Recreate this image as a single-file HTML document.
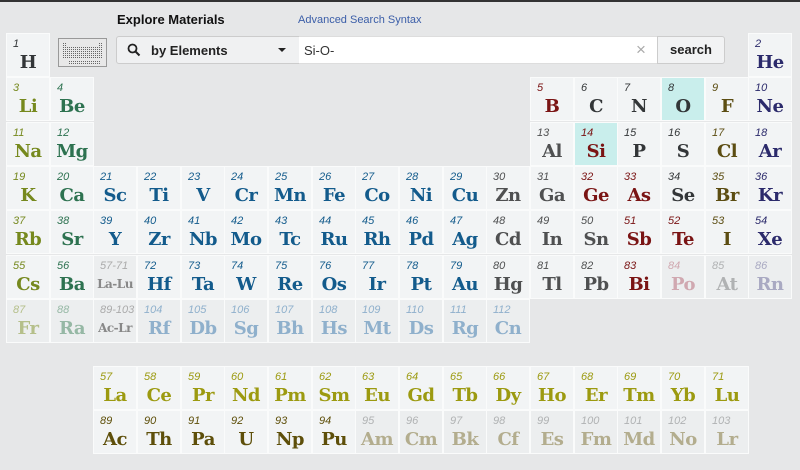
<!DOCTYPE html>
<html><head><meta charset="utf-8"><style>
*{box-sizing:border-box;margin:0;padding:0}
body{width:800px;height:470px;background:#e6e7e8;position:relative;overflow:hidden;font-family:"Liberation Sans",sans-serif}
.top{position:absolute;left:0;top:0;width:800px;height:2px;background:#333}
.c{position:absolute;width:44px;height:44px;background:#f2f4f5;border:1px solid #fafbfb}
.c i{position:absolute;left:6px;top:4px;font-size:11px;font-style:italic;font-family:"Liberation Sans",sans-serif}
.c b{position:absolute;left:0;right:0;top:18px;text-align:center;font-family:"DejaVu Serif",serif;font-weight:bold;font-size:18px;letter-spacing:-0.5px}
.a{color:#76891e}.e{color:#2d7250}.t{color:#135b8c}.p{color:#4f5051}.m{color:#7a1414}.n{color:#333638}.h{color:#5c4d12}.g{color:#2b2a6b}.l{color:#9c9a10}.k{color:#5e4f0a}
.f{background:#eceeef}
.fa{color:#b5bf8a}.fe{color:#96b8a5}.ft{color:#8fb0cc}.fm{color:#d0a8b0}.fp{color:#b0b2b3}.fg{color:#a9a9c2}.fk{color:#b3ad8e}
.cy{background:#c9eeec}
.r b{font-size:12px;top:21px;color:#888}.r i{color:#aaa}
</style></head><body>
<div class="top"></div>
<div style="position:absolute;left:117px;top:12px;font-size:13px;font-weight:bold;color:#111">Explore Materials</div>
<div style="position:absolute;left:298px;top:14px;font-size:11px;color:#3b5ea8">Advanced Search Syntax</div>
<div style="position:absolute;left:58px;top:38px;width:49px;height:29px;border:1px solid #999;background:#e8e8e8">
<svg width="47" height="27" viewBox="0 0 47 27">
<defs><pattern id="d" width="2" height="2" patternUnits="userSpaceOnUse"><rect width="1" height="1" fill="#666"/></pattern></defs>
<rect x="3" y="3" width="4" height="17" fill="url(#d)"/><rect x="39" y="3" width="5" height="17" fill="url(#d)"/><rect x="7" y="8" width="32" height="12" fill="url(#d)"/><rect x="9" y="21" width="32" height="4" fill="url(#d)"/></svg></div>
<div style="position:absolute;left:116px;top:36px;width:184px;height:28px;background:#f0f1f2;border:1px solid #ccc;border-radius:3px 0 0 3px">
<svg style="position:absolute;left:10px;top:6px" width="14" height="14" viewBox="0 0 14 14"><circle cx="5.5" cy="5.5" r="4" fill="none" stroke="#222" stroke-width="1.8"/><line x1="8.5" y1="8.5" x2="12.5" y2="12.5" stroke="#222" stroke-width="2"/></svg>
<span style="position:absolute;left:34px;top:6px;font-size:13px;font-weight:bold;color:#222">by Elements</span>
<span style="position:absolute;left:161px;top:11px;width:0;height:0;border-left:4px solid transparent;border-right:4px solid transparent;border-top:4px solid #222"></span></div>
<div style="position:absolute;left:299px;top:36px;width:358px;height:28px;background:#fff;border-top:1px solid #ddd;border-bottom:1px solid #ddd">
<span style="position:absolute;left:5px;top:6px;font-size:13px;color:#333">Si-O-</span>
<span style="position:absolute;left:337px;top:3px;font-size:17px;color:#aaa">×</span></div>
<div style="position:absolute;left:657px;top:36px;width:68px;height:28px;background:#f2f3f4;border:1px solid #ccc;border-radius:0 3px 3px 0;font-size:13px;font-weight:bold;color:#222;text-align:center;line-height:26px">search</div>

<div class="c" style="left:6px;top:33px"><i class="n">1</i><b class="n">H</b></div>
<div class="c" style="left:748px;top:33px"><i class="g">2</i><b class="g">He</b></div>

<div class="c" style="left:6px;top:77px"><i class="a">3</i><b class="a">Li</b></div>
<div class="c" style="left:50px;top:77px"><i class="e">4</i><b class="e">Be</b></div>
<div class="c" style="left:530px;top:77px"><i class="m">5</i><b class="m">B</b></div>
<div class="c" style="left:574px;top:77px"><i class="n">6</i><b class="n">C</b></div>
<div class="c" style="left:617px;top:77px"><i class="n">7</i><b class="n">N</b></div>
<div class="c cy" style="left:661px;top:77px"><i class="n">8</i><b class="n">O</b></div>
<div class="c" style="left:705px;top:77px"><i class="h">9</i><b class="h">F</b></div>
<div class="c" style="left:748px;top:77px"><i class="g">10</i><b class="g">Ne</b></div>

<div class="c" style="left:6px;top:122px"><i class="a">11</i><b class="a">Na</b></div>
<div class="c" style="left:50px;top:122px"><i class="e">12</i><b class="e">Mg</b></div>
<div class="c" style="left:530px;top:122px"><i class="p">13</i><b class="p">Al</b></div>
<div class="c cy" style="left:574px;top:122px"><i class="m">14</i><b class="m">Si</b></div>
<div class="c" style="left:617px;top:122px"><i class="n">15</i><b class="n">P</b></div>
<div class="c" style="left:661px;top:122px"><i class="n">16</i><b class="n">S</b></div>
<div class="c" style="left:705px;top:122px"><i class="h">17</i><b class="h">Cl</b></div>
<div class="c" style="left:748px;top:122px"><i class="g">18</i><b class="g">Ar</b></div>

<div class="c" style="left:6px;top:166px"><i class="a">19</i><b class="a">K</b></div>
<div class="c" style="left:50px;top:166px"><i class="e">20</i><b class="e">Ca</b></div>
<div class="c" style="left:93px;top:166px"><i class="t">21</i><b class="t">Sc</b></div>
<div class="c" style="left:137px;top:166px"><i class="t">22</i><b class="t">Ti</b></div>
<div class="c" style="left:181px;top:166px"><i class="t">23</i><b class="t">V</b></div>
<div class="c" style="left:224px;top:166px"><i class="t">24</i><b class="t">Cr</b></div>
<div class="c" style="left:268px;top:166px"><i class="t">25</i><b class="t">Mn</b></div>
<div class="c" style="left:312px;top:166px"><i class="t">26</i><b class="t">Fe</b></div>
<div class="c" style="left:355px;top:166px"><i class="t">27</i><b class="t">Co</b></div>
<div class="c" style="left:399px;top:166px"><i class="t">28</i><b class="t">Ni</b></div>
<div class="c" style="left:443px;top:166px"><i class="t">29</i><b class="t">Cu</b></div>
<div class="c" style="left:486px;top:166px"><i class="p">30</i><b class="p">Zn</b></div>
<div class="c" style="left:530px;top:166px"><i class="p">31</i><b class="p">Ga</b></div>
<div class="c" style="left:574px;top:166px"><i class="m">32</i><b class="m">Ge</b></div>
<div class="c" style="left:617px;top:166px"><i class="m">33</i><b class="m">As</b></div>
<div class="c" style="left:661px;top:166px"><i class="n">34</i><b class="n">Se</b></div>
<div class="c" style="left:705px;top:166px"><i class="h">35</i><b class="h">Br</b></div>
<div class="c" style="left:748px;top:166px"><i class="g">36</i><b class="g">Kr</b></div>

<div class="c" style="left:6px;top:210px"><i class="a">37</i><b class="a">Rb</b></div>
<div class="c" style="left:50px;top:210px"><i class="e">38</i><b class="e">Sr</b></div>
<div class="c" style="left:93px;top:210px"><i class="t">39</i><b class="t">Y</b></div>
<div class="c" style="left:137px;top:210px"><i class="t">40</i><b class="t">Zr</b></div>
<div class="c" style="left:181px;top:210px"><i class="t">41</i><b class="t">Nb</b></div>
<div class="c" style="left:224px;top:210px"><i class="t">42</i><b class="t">Mo</b></div>
<div class="c" style="left:268px;top:210px"><i class="t">43</i><b class="t">Tc</b></div>
<div class="c" style="left:312px;top:210px"><i class="t">44</i><b class="t">Ru</b></div>
<div class="c" style="left:355px;top:210px"><i class="t">45</i><b class="t">Rh</b></div>
<div class="c" style="left:399px;top:210px"><i class="t">46</i><b class="t">Pd</b></div>
<div class="c" style="left:443px;top:210px"><i class="t">47</i><b class="t">Ag</b></div>
<div class="c" style="left:486px;top:210px"><i class="p">48</i><b class="p">Cd</b></div>
<div class="c" style="left:530px;top:210px"><i class="p">49</i><b class="p">In</b></div>
<div class="c" style="left:574px;top:210px"><i class="p">50</i><b class="p">Sn</b></div>
<div class="c" style="left:617px;top:210px"><i class="m">51</i><b class="m">Sb</b></div>
<div class="c" style="left:661px;top:210px"><i class="m">52</i><b class="m">Te</b></div>
<div class="c" style="left:705px;top:210px"><i class="h">53</i><b class="h">I</b></div>
<div class="c" style="left:748px;top:210px"><i class="g">54</i><b class="g">Xe</b></div>

<div class="c" style="left:6px;top:255px"><i class="a">55</i><b class="a">Cs</b></div>
<div class="c" style="left:50px;top:255px"><i class="e">56</i><b class="e">Ba</b></div>
<div class="c f r" style="left:93px;top:255px"><i>57-71</i><b>La-Lu</b></div>
<div class="c" style="left:137px;top:255px"><i class="t">72</i><b class="t">Hf</b></div>
<div class="c" style="left:181px;top:255px"><i class="t">73</i><b class="t">Ta</b></div>
<div class="c" style="left:224px;top:255px"><i class="t">74</i><b class="t">W</b></div>
<div class="c" style="left:268px;top:255px"><i class="t">75</i><b class="t">Re</b></div>
<div class="c" style="left:312px;top:255px"><i class="t">76</i><b class="t">Os</b></div>
<div class="c" style="left:355px;top:255px"><i class="t">77</i><b class="t">Ir</b></div>
<div class="c" style="left:399px;top:255px"><i class="t">78</i><b class="t">Pt</b></div>
<div class="c" style="left:443px;top:255px"><i class="t">79</i><b class="t">Au</b></div>
<div class="c" style="left:486px;top:255px"><i class="p">80</i><b class="p">Hg</b></div>
<div class="c" style="left:530px;top:255px"><i class="p">81</i><b class="p">Tl</b></div>
<div class="c" style="left:574px;top:255px"><i class="p">82</i><b class="p">Pb</b></div>
<div class="c" style="left:617px;top:255px"><i class="m">83</i><b class="m">Bi</b></div>
<div class="c f" style="left:661px;top:255px"><i class="fm">84</i><b class="fm">Po</b></div>
<div class="c f" style="left:705px;top:255px"><i class="fp">85</i><b class="fp">At</b></div>
<div class="c f" style="left:748px;top:255px"><i class="fg">86</i><b class="fg">Rn</b></div>

<div class="c f" style="left:6px;top:299px"><i class="fa">87</i><b class="fa">Fr</b></div>
<div class="c f" style="left:50px;top:299px"><i class="fe">88</i><b class="fe">Ra</b></div>
<div class="c f r" style="left:93px;top:299px"><i>89-103</i><b>Ac-Lr</b></div>
<div class="c f" style="left:137px;top:299px"><i class="ft">104</i><b class="ft">Rf</b></div>
<div class="c f" style="left:181px;top:299px"><i class="ft">105</i><b class="ft">Db</b></div>
<div class="c f" style="left:224px;top:299px"><i class="ft">106</i><b class="ft">Sg</b></div>
<div class="c f" style="left:268px;top:299px"><i class="ft">107</i><b class="ft">Bh</b></div>
<div class="c f" style="left:312px;top:299px"><i class="ft">108</i><b class="ft">Hs</b></div>
<div class="c f" style="left:355px;top:299px"><i class="ft">109</i><b class="ft">Mt</b></div>
<div class="c f" style="left:399px;top:299px"><i class="ft">110</i><b class="ft">Ds</b></div>
<div class="c f" style="left:443px;top:299px"><i class="ft">111</i><b class="ft">Rg</b></div>
<div class="c f" style="left:486px;top:299px"><i class="ft">112</i><b class="ft">Cn</b></div>

<div class="c" style="left:93px;top:366px"><i class="l">57</i><b class="l">La</b></div>
<div class="c" style="left:137px;top:366px"><i class="l">58</i><b class="l">Ce</b></div>
<div class="c" style="left:181px;top:366px"><i class="l">59</i><b class="l">Pr</b></div>
<div class="c" style="left:224px;top:366px"><i class="l">60</i><b class="l">Nd</b></div>
<div class="c" style="left:268px;top:366px"><i class="l">61</i><b class="l">Pm</b></div>
<div class="c" style="left:312px;top:366px"><i class="l">62</i><b class="l">Sm</b></div>
<div class="c" style="left:355px;top:366px"><i class="l">63</i><b class="l">Eu</b></div>
<div class="c" style="left:399px;top:366px"><i class="l">64</i><b class="l">Gd</b></div>
<div class="c" style="left:443px;top:366px"><i class="l">65</i><b class="l">Tb</b></div>
<div class="c" style="left:486px;top:366px"><i class="l">66</i><b class="l">Dy</b></div>
<div class="c" style="left:530px;top:366px"><i class="l">67</i><b class="l">Ho</b></div>
<div class="c" style="left:574px;top:366px"><i class="l">68</i><b class="l">Er</b></div>
<div class="c" style="left:617px;top:366px"><i class="l">69</i><b class="l">Tm</b></div>
<div class="c" style="left:661px;top:366px"><i class="l">70</i><b class="l">Yb</b></div>
<div class="c" style="left:705px;top:366px"><i class="l">71</i><b class="l">Lu</b></div>

<div class="c" style="left:93px;top:410px"><i class="k">89</i><b class="k">Ac</b></div>
<div class="c" style="left:137px;top:410px"><i class="k">90</i><b class="k">Th</b></div>
<div class="c" style="left:181px;top:410px"><i class="k">91</i><b class="k">Pa</b></div>
<div class="c" style="left:224px;top:410px"><i class="k">92</i><b class="k">U</b></div>
<div class="c" style="left:268px;top:410px"><i class="k">93</i><b class="k">Np</b></div>
<div class="c" style="left:312px;top:410px"><i class="k">94</i><b class="k">Pu</b></div>
<div class="c f" style="left:355px;top:410px"><i class="fp">95</i><b class="fk">Am</b></div>
<div class="c f" style="left:399px;top:410px"><i class="fp">96</i><b class="fk">Cm</b></div>
<div class="c f" style="left:443px;top:410px"><i class="fp">97</i><b class="fk">Bk</b></div>
<div class="c f" style="left:486px;top:410px"><i class="fp">98</i><b class="fk">Cf</b></div>
<div class="c f" style="left:530px;top:410px"><i class="fp">99</i><b class="fk">Es</b></div>
<div class="c f" style="left:574px;top:410px"><i class="fp">100</i><b class="fk">Fm</b></div>
<div class="c f" style="left:617px;top:410px"><i class="fp">101</i><b class="fk">Md</b></div>
<div class="c f" style="left:661px;top:410px"><i class="fp">102</i><b class="fk">No</b></div>
<div class="c f" style="left:705px;top:410px"><i class="fp">103</i><b class="fk">Lr</b></div>
</body></html>
